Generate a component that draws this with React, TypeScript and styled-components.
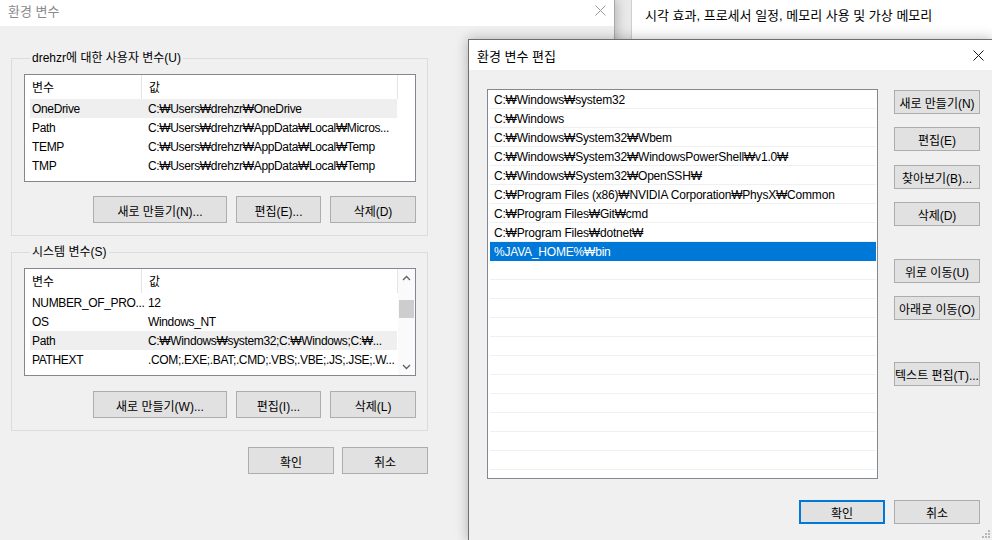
import React from 'react';
import styled, { createGlobalStyle } from 'styled-components';

const GlobalStyle = createGlobalStyle`
    html, body {
        margin: 0;
        padding: 0;
    }
    body {
        font-family: "Liberation Sans", "Noto Sans CJK KR", sans-serif;
        font-size: 12px;
        color: #000;
    }
`

const Desktop = styled.div`
    position: relative;
    width: 992px;
    height: 540px;
    overflow: hidden;
    background: #e9e9e9;
`

/* window behind, on the right */
const BackWindow = styled.div`
    position: absolute;
    left: 631px;
    top: 0;
    width: 361px;
    height: 540px;
    background: #fff;
    border-left: 1px solid #cfcfcf;
    box-sizing: border-box;
    padding: 7px 0 0 13px;
    line-height: 17px;
    font-size: 13px;
`

/* 환경 변수 window */
const EnvWindow = styled.div`
    position: absolute;
    left: 0;
    top: 0;
    width: 614px;
    height: 560px;
    background: #f0f0f0;
    box-shadow: 1px 0 0 #a8a8a8, 3px 0 10px rgba(0, 0, 0, 0.22);
`

const TitleBar = styled.div<{ $h: number; $inactive?: boolean; $lift?: number }>`
    height: ${p => p.$h}px;
    box-sizing: border-box;
    padding: 0 8px ${p => p.$lift || 0}px 8px;
    background: #fff;
    display: flex;
    align-items: center;
    justify-content: space-between;
    color: ${p => (p.$inactive ? '#8a8a8a' : '#000')};
    font-size: 13px;
`

const CloseBtn = styled.svg`
    display: block;
    flex: none;
`

const EnvBody = styled.div`
    width: 417px;
    padding: 24px 0 0 11px;
    display: flex;
    flex-direction: column;
`

const Group = styled.fieldset<{ $top?: number }>`
    margin: ${p => p.$top || 0}px 0 0 0;
    padding: 8px 11px 12px 12px;
    border: 1px solid #dcdcdc;
    min-width: 0;
`

const Legend = styled.legend`
    margin-left: 6px;
    padding: 0 2px;
    line-height: 16px;
`

const ListView = styled.div`
    height: 108px;
    box-sizing: border-box;
    border: 1px solid #828790;
    background: #fff;
    display: flex;
    overflow: hidden;
`

const ListContent = styled.div`
    width: 373px;
    flex: none;
`

const HeaderRow = styled.div`
    display: flex;
    height: 24px;
`

const HeaderCell = styled.div<{ $w: number }>`
    width: ${p => p.$w}px;
    box-sizing: border-box;
    height: 100%;
    padding: 3px 0 0 7px;
    line-height: 21px;
    border-right: 1px solid #e5e5e5;
`

const VarRow = styled.div<{ $sel?: boolean }>`
    margin-left: 5px;
    width: 367px;
    height: 19px;
    box-sizing: border-box;
    padding-top: 2px;
    line-height: 17px;
    display: grid;
    grid-template-columns: 116px 1fr;
    background: ${p => (p.$sel ? '#efefef' : 'transparent')};
`

const Cell = styled.div`
    padding-left: 2px;
    white-space: nowrap;
    overflow: hidden;
    letter-spacing: -0.35px;
`

const ScrollBar = styled.div`
    width: 17px;
    flex: none;
    background: #fafafa;
    display: flex;
    flex-direction: column;
    align-items: center;
`

const ScrollArrow = styled.div`
    height: 17px;
    width: 17px;
    display: flex;
    align-items: center;
    justify-content: center;
`

const Thumb = styled.div`
    width: 15px;
    height: 18px;
    background: #cdcdcd;
    margin-top: 14px;
`

const Spacer = styled.div`
    flex: 1;
`

const ButtonRow = styled.div<{ $top: number; $gap: number; $w?: number }>`
    display: flex;
    justify-content: flex-end;
    gap: ${p => p.$gap}px;
    margin-top: ${p => p.$top}px;
    width: ${p => (p.$w ? `${p.$w}px` : 'auto')};
`

const Button = styled.button<{ $w: number; $h: number; $default?: boolean; $top?: number }>`
    width: ${p => p.$w}px;
    height: ${p => p.$h}px;
    margin: ${p => p.$top || 0}px 0 0 0;
    box-sizing: border-box;
    padding: 1px 0 0 0;
    background: #e1e1e1;
    border: ${p => (p.$default ? '2px solid #0078d7' : '1px solid #adadad')};
    font-family: inherit;
    font-size: 12px;
    color: #000;
    white-space: nowrap;
    flex: none;
`

/* 환경 변수 편집 dialog */
const EditDialog = styled.div`
    position: absolute;
    left: 468px;
    top: 39px;
    width: 525px;
    height: 502px;
    box-sizing: border-box;
    border: 1px solid #6e6e6e;
    background: #f0f0f0;
    box-shadow: 0 0 12px rgba(0, 0, 0, 0.28);
`

const DialogBody = styled.div`
    padding: 19px 0 0 18px;
`

const DialogGrid = styled.div`
    display: grid;
    grid-template-columns: 391px 86px;
    column-gap: 16px;
`

const PathList = styled.div`
    height: 390px;
    box-sizing: border-box;
    border: 1px solid #828790;
    background: #fff;
    padding: 0 1px 0 2px;
    overflow: hidden;
`

const PathRow = styled.div<{ $sel?: boolean }>`
    height: 19px;
    box-sizing: border-box;
    padding: 2px 0 0 4px;
    line-height: 16px;
    white-space: nowrap;
    letter-spacing: -0.2px;
    border-bottom: 1px solid ${p => (p.$sel ? '#0078d7' : '#f0f0f0')};
    background: ${p => (p.$sel ? '#0078d7' : '#fff')};
    color: ${p => (p.$sel ? '#fff' : '#000')};
`

const SideButtons = styled.div`
    display: flex;
    flex-direction: column;
`

const Grip = styled.svg`
    position: absolute;
    right: 1px;
    bottom: 1px;
`

const Close = ({ color }: { color: string }) => (
    <CloseBtn width="11" height="11" viewBox="0 0 11 11">
        <path d="M0.5 0.5 L10.5 10.5 M10.5 0.5 L0.5 10.5" stroke={color} strokeWidth="1" fill="none" />
    </CloseBtn>
)

const Chevron = ({ up }: { up?: boolean }) => (
    <svg width="9" height="6" viewBox="0 0 9 6">
        <path d={up ? 'M1 5 L4.5 1.5 L8 5' : 'M1 1 L4.5 4.5 L8 1'} stroke="#606060" strokeWidth="1.3" fill="none" />
    </svg>
)

const W = '\u20A9';

const userVars = [
    ['OneDrive', `C:${W}Users${W}drehzr${W}OneDrive`, true],
    ['Path', `C:${W}Users${W}drehzr${W}AppData${W}Local${W}Micros...`, false],
    ['TEMP', `C:${W}Users${W}drehzr${W}AppData${W}Local${W}Temp`, false],
    ['TMP', `C:${W}Users${W}drehzr${W}AppData${W}Local${W}Temp`, false],
] as const;

const sysVars = [
    ['NUMBER_OF_PRO...', '12', false],
    ['OS', 'Windows_NT', false],
    ['Path', `C:${W}Windows${W}system32;C:${W}Windows;C:${W}...`, true],
    ['PATHEXT', '.COM;.EXE;.BAT;.CMD;.VBS;.VBE;.JS;.JSE;.W...', false],
] as const;

const paths = [
    `C:${W}Windows${W}system32`,
    `C:${W}Windows`,
    `C:${W}Windows${W}System32${W}Wbem`,
    `C:${W}Windows${W}System32${W}WindowsPowerShell${W}v1.0${W}`,
    `C:${W}Windows${W}System32${W}OpenSSH${W}`,
    `C:${W}Program Files (x86)${W}NVIDIA Corporation${W}PhysX${W}Common`,
    `C:${W}Program Files${W}Git${W}cmd`,
    `C:${W}Program Files${W}dotnet${W}`,
    `%JAVA_HOME%${W}bin`,
];

const sideButtons: [string, number][] = [
    ['새로 만들기(N)', 1],
    ['편집(E)', 13],
    ['찾아보기(B)...', 14],
    ['삭제(D)', 13],
    ['위로 이동(U)', 33],
    ['아래로 이동(O)', 13],
    ['텍스트 편집(T)...', 42],
];

function VarList(props: { rows: readonly (readonly [string, string, boolean])[]; scroll?: boolean }) {
    return (
        <ListView>
            <ListContent>
                <HeaderRow>
                    <HeaderCell $w={117}>변수</HeaderCell>
                    <HeaderCell $w={256}>값</HeaderCell>
                </HeaderRow>
                {props.rows.map(r => (
                    <VarRow key={r[0]} $sel={r[2]}>
                        <Cell>{r[0]}</Cell>
                        <Cell>{r[1]}</Cell>
                    </VarRow>
                ))}
            </ListContent>
            {props.scroll && (
                <ScrollBar>
                    <ScrollArrow><Chevron up /></ScrollArrow>
                    <Thumb />
                    <Spacer />
                    <ScrollArrow><Chevron /></ScrollArrow>
                </ScrollBar>
            )}
        </ListView>
    )
}

export default function App() {
    const emptyRows = Array.from({ length: 12 });
    return (
        <>
            <GlobalStyle />
            <Desktop>
                <BackWindow>시각 효과, 프로세서 일정, 메모리 사용 및 가상 메모리</BackWindow>

                <EnvWindow>
                    <TitleBar $h={26} $lift={5} $inactive>
                        <span>환경 변수</span>
                        <Close color="#9a9a9a" />
                    </TitleBar>
                    <EnvBody>
                        <Group>
                            <Legend>drehzr에 대한 사용자 변수(U)</Legend>
                            <VarList rows={userVars} />
                            <ButtonRow $top={14} $gap={9}>
                                <Button $w={134} $h={27}>새로 만들기(N)...</Button>
                                <Button $w={85} $h={27}>편집(E)...</Button>
                                <Button $w={86} $h={27}>삭제(D)</Button>
                            </ButtonRow>
                        </Group>
                        <Group $top={8}>
                            <Legend>시스템 변수(S)</Legend>
                            <VarList rows={sysVars} scroll />
                            <ButtonRow $top={15} $gap={9}>
                                <Button $w={134} $h={27}>새로 만들기(W)...</Button>
                                <Button $w={85} $h={27}>편집(I)...</Button>
                                <Button $w={86} $h={27}>삭제(L)</Button>
                            </ButtonRow>
                        </Group>
                        <ButtonRow $top={16} $gap={8}>
                            <Button $w={86} $h={27}>확인</Button>
                            <Button $w={86} $h={27}>취소</Button>
                        </ButtonRow>
                    </EnvBody>
                </EnvWindow>

                <EditDialog>
                    <TitleBar $h={30}>
                        <span>환경 변수 편집</span>
                        <Close color="#1a1a1a" />
                    </TitleBar>
                    <DialogBody>
                        <DialogGrid>
                            <PathList>
                                {paths.map((p, i) => (
                                    <PathRow key={p} $sel={i === paths.length - 1}>{p}</PathRow>
                                ))}
                                {emptyRows.map((_, i) => (
                                    <PathRow key={'e' + i} />
                                ))}
                            </PathList>
                            <SideButtons>
                                {sideButtons.map(([label, top]) => (
                                    <Button key={label} $w={86} $h={24} $top={top}>{label}</Button>
                                ))}
                            </SideButtons>
                        </DialogGrid>
                        <ButtonRow $top={21} $gap={9} $w={493}>
                            <Button $w={86} $h={24} $default>확인</Button>
                            <Button $w={86} $h={24}>취소</Button>
                        </ButtonRow>
                    </DialogBody>
                    <Grip width="10" height="10" viewBox="0 0 10 10">
                        <rect x="7" y="1" width="2" height="2" fill="#b8b8b8" />
                        <rect x="4" y="4" width="2" height="2" fill="#b8b8b8" />
                        <rect x="7" y="4" width="2" height="2" fill="#b8b8b8" />
                        <rect x="1" y="7" width="2" height="2" fill="#b8b8b8" />
                        <rect x="4" y="7" width="2" height="2" fill="#b8b8b8" />
                        <rect x="7" y="7" width="2" height="2" fill="#b8b8b8" />
                    </Grip>
                </EditDialog>
            </Desktop>
        </>
    )
}
